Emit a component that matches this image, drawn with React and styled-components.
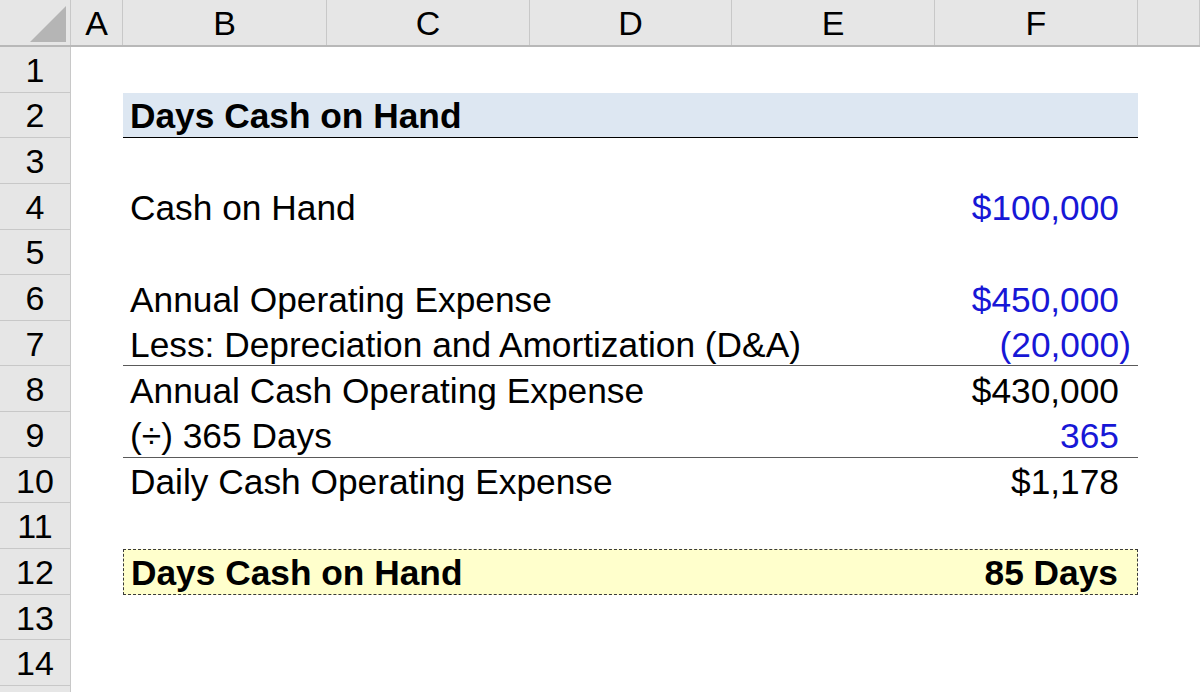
import React from 'react';
import styled, { createGlobalStyle } from 'styled-components';

const GlobalStyle = createGlobalStyle`
  html, body {
    margin: 0;
    padding: 0;
    background: #ffffff;
    overflow: hidden;
  }
  body {
    font-family: 'Liberation Sans', Arial, sans-serif;
    color: #000;
  }
`;

const ROW_H = 45.65;
const COLS = ['A', 'B', 'C', 'D', 'E', 'F', ''];
const COL_W = [52, 204, 203, 202, 203, 203];

const Sheet = styled.div`
  width: 1200px;
  height: 692px;
  overflow: hidden;
  font-size: 35.3px;
`;

const HeaderRow = styled.div`
  display: grid;
  grid-template-columns: 71px ${COL_W.map((w) => `${w}px`).join(' ')} 1fr;
  height: 47px;
  background: #e6e6e6;
  border-bottom: 2px solid #b8b8b8;
  box-sizing: border-box;
  font-size: 34px;
`;

const Corner = styled.div`
  display: flex;
  align-items: flex-end;
  justify-content: flex-end;
  padding: 0 4px 3px 0;
  border-right: 1px solid #c8c8c8;
`;

const ColHead = styled.div`
  display: flex;
  align-items: center;
  justify-content: center;
  border-right: 1px solid #c8c8c8;
  box-sizing: border-box;
  padding-top: 2px;
`;

const Row = styled.div`
  display: grid;
  grid-template-columns: 71px 52px 1015px 1fr;
  height: ${ROW_H}px;
`;

const RowNum = styled.div`
  display: flex;
  align-items: center;
  justify-content: center;
  background: #e6e6e6;
  border-right: 1px solid #c8c8c8;
  border-bottom: 1px solid #c8c8c8;
  box-sizing: border-box;
  font-size: 34px;
  padding-top: 2px;
`;

const Cell = styled.div`
  display: flex;
  align-items: center;
  justify-content: space-between;
  box-sizing: border-box;
  padding: 3px 0 0 7px;
  font-weight: ${(p) => (p.$bold ? 700 : 400)};
  background: ${(p) => p.$fill || 'transparent'};
  border-bottom: ${(p) => p.$rule || 'none'};
  border: ${(p) => p.$box || undefined};
`;

const Value = styled.span`
  color: ${(p) => (p.$blue ? '#1717d6' : '#000')};
  padding-right: ${(p) => (p.$neg ? 7 : 19)}px;
`;

const rows = [
  { n: 1 },
  { n: 2, label: 'Days Cash on Hand', kind: 'title' },
  { n: 3 },
  { n: 4, label: 'Cash on Hand', value: '$100,000', blue: true },
  { n: 5 },
  { n: 6, label: 'Annual Operating Expense', value: '$450,000', blue: true },
  { n: 7, label: 'Less: Depreciation and Amortization (D&A)', value: '(20,000)', blue: true, neg: true, rule: true },
  { n: 8, label: 'Annual Cash Operating Expense', value: '$430,000' },
  { n: 9, label: '(÷) 365 Days', value: '365', blue: true, rule: true },
  { n: 10, label: 'Daily Cash Operating Expense', value: '$1,178' },
  { n: 11 },
  { n: 12, label: 'Days Cash on Hand', value: '85 Days', kind: 'total' },
  { n: 13 },
  { n: 14 },
  { n: 15, hidden: true },
];

function cellProps(r) {
  if (r.kind === 'title') return { $bold: true, $fill: '#dde7f2', $rule: '1px solid #000' };
  if (r.kind === 'total') return { $bold: true, $fill: '#ffffcc', $box: '1px dashed #3a3a3a' };
  if (r.rule) return { $rule: '1px solid #5a5a5a' };
  return {};
}

export default function App() {
  return (
    <Sheet>
      <GlobalStyle />
      <HeaderRow>
        <Corner>
          <svg width="36" height="36" viewBox="0 0 36 36">
            <polygon points="36,0 36,36 0,36" fill="#b5b5b5" />
          </svg>
        </Corner>
        {COLS.map((c, i) => (
          <ColHead key={i}>{c}</ColHead>
        ))}
      </HeaderRow>
      {rows.map((r) => (
        <Row key={r.n}>
          <RowNum>{r.hidden ? '' : r.n}</RowNum>
          <div />
          <Cell {...cellProps(r)}>
            <span>{r.label}</span>
            {r.value && (
              <Value $blue={r.blue} $neg={r.neg}>
                {r.value}
              </Value>
            )}
          </Cell>
          <div />
        </Row>
      ))}
    </Sheet>
  );
}
